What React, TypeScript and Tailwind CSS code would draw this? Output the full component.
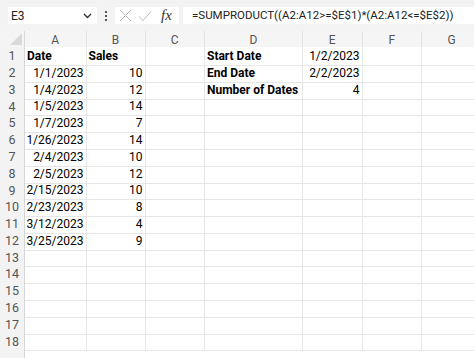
import React from 'react';

const font = { fontFamily: 'Roboto, "Noto Sans", sans-serif' };

type Cell = { v: string; b?: boolean; r?: boolean };

const rows: Cell[][] = [
  [{ v: 'Date', b: true }, { v: 'Sales', b: true }, { v: '' }, { v: 'Start Date', b: true }, { v: '1/2/2023', r: true }],
  [{ v: '1/1/2023', r: true }, { v: '10', r: true }, { v: '' }, { v: 'End Date', b: true }, { v: '2/2/2023', r: true }],
  [{ v: '1/4/2023', r: true }, { v: '12', r: true }, { v: '' }, { v: 'Number of Dates', b: true }, { v: '4', r: true }],
  [{ v: '1/5/2023', r: true }, { v: '14', r: true }],
  [{ v: '1/7/2023', r: true }, { v: '7', r: true }],
  [{ v: '1/26/2023', r: true }, { v: '14', r: true }],
  [{ v: '2/4/2023', r: true }, { v: '10', r: true }],
  [{ v: '2/5/2023', r: true }, { v: '12', r: true }],
  [{ v: '2/15/2023', r: true }, { v: '10', r: true }],
  [{ v: '2/23/2023', r: true }, { v: '8', r: true }],
  [{ v: '3/12/2023', r: true }, { v: '4', r: true }],
  [{ v: '3/25/2023', r: true }, { v: '9', r: true }],
];

const cols = ['A', 'B', 'C', 'D', 'E', 'F', 'G'];
const gridCols = 'grid grid-cols-[25px_61.5px_59px_59.5px_98px_59.5px_59.5px_60px]';

const App = () => {
  const allRows = Array.from({ length: 18 }, (_, i) => rows[i] || []);

  return (
    <div className="w-[474px] h-[358px] overflow-hidden bg-white" style={font}>
      {/* formula bar */}
      <div className="h-[31px] bg-[#f3f3f3] flex items-start pt-[7px]">
        <div className="ml-[8px] w-[89px] h-[17px] bg-white flex items-center justify-between pl-[3px] pr-[5px]">
          <span className="text-[12px] text-[#222]">E3</span>
          <svg width="9" height="6" viewBox="0 0 9 6">
            <path d="M1 1 L4.5 4.5 L8 1" fill="none" stroke="#333" strokeWidth="1.4" />
          </svg>
        </div>
        <div className="w-[18px] h-[17px] flex flex-col items-center justify-center gap-[2px]">
          <div className="w-[2px] h-[2px] bg-[#555]" />
          <div className="w-[2px] h-[2px] bg-[#555]" />
          <div className="w-[2px] h-[2px] bg-[#555]" />
        </div>
        <div className="w-[64px] h-[17px] bg-white flex items-center pl-[4px]">
          <svg width="13" height="13" viewBox="0 0 13 13">
            <path d="M1 1 L12 12 M12 1 L1 12" stroke="#b8b8b8" strokeWidth="1" />
          </svg>
          <svg width="14" height="12" viewBox="0 0 14 12" className="ml-[6px]">
            <path d="M1 6.5 L5 10.5 L13 1.5" fill="none" stroke="#b8b8b8" strokeWidth="1" />
          </svg>
          <span
            className="ml-[9px] text-[15px] leading-none italic text-[#333]"
            style={{ fontFamily: '"Liberation Serif", serif' }}
          >
            fx
          </span>
        </div>
        <div className="ml-[4px] flex-1 h-[17px] bg-white flex items-center pl-[9px]">
          <span className="text-[11.5px] text-[#222] whitespace-nowrap">=SUMPRODUCT((A2:A12&gt;=$E$1)*(A2:A12&lt;=$E$2))</span>
        </div>
      </div>

      {/* column headers */}
      <div className={`${gridCols} h-[16px] bg-[#f5f5f5]`}>
        <div className="relative border-r border-[#dadada]">
          <svg width="25" height="16" className="absolute left-0 top-0">
            <polygon points="22,2 22,14 10,14" fill="#d9d9d9" />
          </svg>
        </div>
        {cols.map((c) => (
          <div key={c} className="flex items-center justify-center text-[12px] text-[#555] border-r border-[#e3e3e3]">
            {c}
          </div>
        ))}
      </div>

      {/* rows */}
      {allRows.map((r, i) => (
        <div key={i} className={`${gridCols} h-[16.8px]`}>
          <div className="bg-[#f3f3f3] border-r border-[#d6d6d6] flex items-center justify-center text-[12.5px] text-[#555]">
            {i + 1}
          </div>
          {cols.map((c, j) => {
            const cell = r[j];
            return (
              <div
                key={c}
                className={`border-r border-b border-[#e6e6e6] flex items-center text-[12px] text-black whitespace-nowrap overflow-visible ${
                  cell?.r ? 'justify-end pr-[2px]' : 'justify-start pl-[2px]'
                } ${cell?.b ? 'font-bold' : ''}`}
              >
                {cell?.v}
              </div>
            );
          })}
        </div>
      ))}
      <div className={`${gridCols} h-[16.8px]`}>
        <div className="bg-[#f3f3f3] border-r border-[#d6d6d6]" />
      </div>
    </div>
  );
};

export default App;
